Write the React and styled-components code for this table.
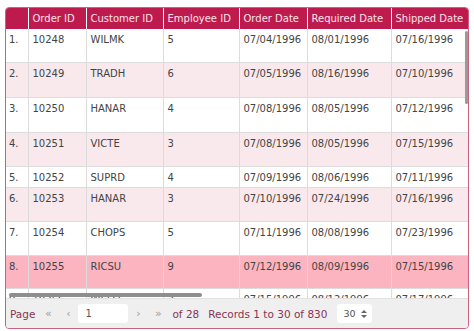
import React from "react";
import styled, { createGlobalStyle } from "styled-components";

const Global = createGlobalStyle`
  html, body { margin: 0; padding: 0; background: #fff; }
  body { font-family: "DejaVu Sans", Verdana, sans-serif; }
`;

const Page = styled.div`
  padding: 7px 0 0 5px;
`;

const Grid = styled.div`
  position: relative;
  width: 462px;
  border: 1px solid #c9627f;
  border-radius: 4px;
  overflow: hidden;
  background: #fff;
`;

const Viewport = styled.div`
  position: relative;
  height: 290px;
  overflow: hidden;
`;

const Table = styled.table`
  border-collapse: collapse;
  table-layout: fixed;
  width: 470px;
  font-size: 10px;
  color: #444;
`;

const Th = styled.th`
  background: #bd1a4d;
  color: #fbe4eb;
  font-weight: normal;
  text-align: left;
  height: 21px;
  padding: 0 0 0 4px;
  border-right: 1px solid rgba(255, 255, 255, 0.12);
  white-space: nowrap;
  overflow: hidden;
`;

const Tr = styled.tr`
  background: ${(p) => (p.$selected ? "#fbb4c0" : p.$alt ? "#f9e9ed" : "#fff")};
  height: ${(p) => p.$h}px;
`;

const Td = styled.td`
  vertical-align: top;
  padding: 5px 0 0 4px;
  border-right: 1px solid #dcdcdc;
  border-bottom: 1px solid #dcdcdc;
  white-space: nowrap;
  overflow: hidden;
  line-height: 12px;
  &:first-child { padding-left: 3px; }
`;

const VThumb = styled.div`
  position: absolute;
  right: 0;
  top: 23px;
  width: 3px;
  height: 73px;
  background: #9a9a9a;
  border-radius: 2px;
`;

const HThumb = styled.div`
  position: absolute;
  left: 3px;
  bottom: 1px;
  width: 193px;
  height: 4px;
  background: #8e8e8e;
  border-radius: 2px;
`;

const Footer = styled.div`
  display: flex;
  align-items: center;
  height: 29px;
  background: #efefef;
  border-top: 1px solid #e2e2e2;
  padding: 0 0 0 4px;
  font-size: 10.5px;
  color: #8a3453;
`;

const Label = styled.span`
  margin-left: ${(p) => p.$ml || 0}px;
  margin-right: ${(p) => p.$mr || 0}px;
`;

const NavBtn = styled.span`
  width: 20px;
  height: 19px;
  display: flex;
  align-items: center;
  justify-content: center;
  color: #9c9c9c;
  font-size: 11px;
`;

const Input = styled.div`
  width: 50px;
  height: 19px;
  background: #fff;
  border-radius: 3px;
  display: flex;
  align-items: center;
  padding-left: 7px;
  box-sizing: border-box;
  color: #555;
  font-size: 10px;
`;

const Select = styled.div`
  width: 35px;
  height: 19px;
  background: #fff;
  border-radius: 3px;
  display: flex;
  align-items: center;
  gap: 5px;
  padding-left: 6px;
  box-sizing: border-box;
  color: #555;
  font-size: 9.5px;
`;

const cols = [22, 58, 77, 76, 68, 84, 85];
const headers = ["", "Order ID", "Customer ID", "Employee ID", "Order Date", "Required Date", "Shipped Date"];
const rows = [
  ["1.", "10248", "WILMK", "5", "07/04/1996", "08/01/1996", "07/16/1996", 33],
  ["2.", "10249", "TRADH", "6", "07/05/1996", "08/16/1996", "07/10/1996", 35],
  ["3.", "10250", "HANAR", "4", "07/08/1996", "08/05/1996", "07/12/1996", 35],
  ["4.", "10251", "VICTE", "3", "07/08/1996", "08/05/1996", "07/15/1996", 34],
  ["5.", "10252", "SUPRD", "4", "07/09/1996", "08/06/1996", "07/11/1996", 21],
  ["6.", "10253", "HANAR", "3", "07/10/1996", "07/24/1996", "07/16/1996", 34],
  ["7.", "10254", "CHOPS", "5", "07/11/1996", "08/08/1996", "07/23/1996", 34],
  ["8.", "10255", "RICSU", "9", "07/12/1996", "08/09/1996", "07/15/1996", 33],
  ["9.", "10256", "WELLI", "3", "07/15/1996", "08/12/1996", "07/17/1996", 34],
];

const SortIcon = () => (
  <svg width="6" height="8" viewBox="0 0 6 8">
    <path d="M3 0 L6 3 H0 Z M3 8 L6 5 H0 Z" fill="#666" />
  </svg>
);

export default function App() {
  return (
    <>
      <Global />
      <Page>
        <Grid>
          <Viewport>
            <Table>
              <colgroup>
                {cols.map((w, i) => (
                  <col key={i} style={{ width: w }} />
                ))}
              </colgroup>
              <thead>
                <tr>
                  {headers.map((h, i) => (
                    <Th key={i}>{h}</Th>
                  ))}
                </tr>
              </thead>
              <tbody>
                {rows.map((r, i) => (
                  <Tr key={i} $h={r[7]} $alt={i % 2 === 1} $selected={i === 7}>
                    {r.slice(0, 7).map((c, j) => (
                      <Td key={j}>{c}</Td>
                    ))}
                  </Tr>
                ))}
              </tbody>
            </Table>
            <VThumb />
            <HThumb />
          </Viewport>
          <Footer>
            <Label $mr={3}>Page</Label>
            <NavBtn>«</NavBtn>
            <NavBtn>‹</NavBtn>
            <Input>1</Input>
            <NavBtn>›</NavBtn>
            <NavBtn>»</NavBtn>
            <Label $ml={4} $mr={9}>of 28</Label>
            <Label $mr={10}>Records 1 to 30 of 830</Label>
            <Select>
              30 <SortIcon />
            </Select>
          </Footer>
        </Grid>
      </Page>
    </>
  );
}
